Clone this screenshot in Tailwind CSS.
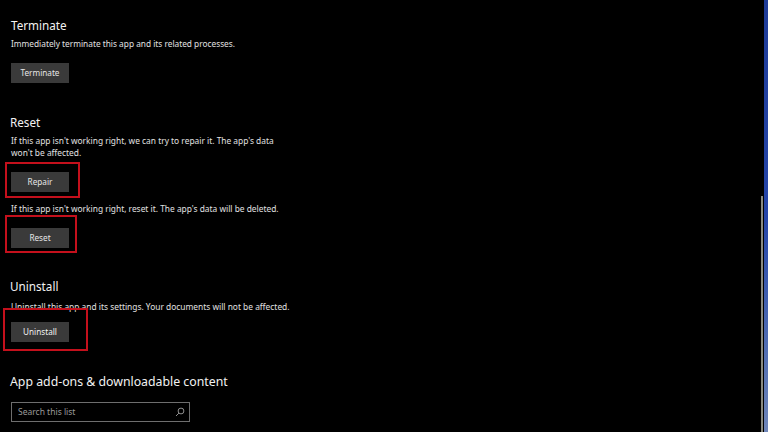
<!DOCTYPE html>
<html lang="en">
<head>
    <meta charset="UTF-8">
    <title>App settings</title>
    <script src="https://cdn.jsdelivr.net/npm/@tailwindcss/browser@4"></script>
</head>
<body class="bg-black">
    <div class="relative flex w-[768px] h-[432px] overflow-hidden bg-black text-white font-['Noto_Sans',sans-serif]">
        <main class="flex-1 pl-[11px] pt-[17px]">
            <!-- Terminate -->
            <h2 class="text-[11.7px] leading-[16px] text-[#f2f2f2]">Terminate</h2>
            <p class="mt-[4px] text-[8.3px] leading-[13px] text-[#e0e0e0]">Immediately terminate this app and its related processes.</p>
            <button class="mt-[13px] block w-[58px] h-[20px] bg-[#3a3a3a] text-[8.2px] text-[#e6e6e6]">Terminate</button>

            <!-- Reset -->
            <h2 class="mt-[31px] -ml-px text-[11.7px] leading-[16px] text-[#f2f2f2]">Reset</h2>
            <p class="mt-[5px] w-[280px] text-[8.4px] leading-[12px] text-[#e0e0e0]">If this app isn't working right, we can try to repair it. The app's data won't be affected.</p>
            <button class="mt-[13px] block w-[58px] h-[20px] bg-[#3a3a3a] text-[8.2px] text-[#e6e6e6]">Repair</button>
            <p class="mt-[10px] text-[8.4px] leading-[13px] text-[#e0e0e0]">If this app isn't working right, reset it. The app's data will be deleted.</p>
            <button class="mt-[13px] block w-[58px] h-[20px] bg-[#3a3a3a] text-[8.2px] text-[#e6e6e6]">Reset</button>

            <!-- Uninstall -->
            <h2 class="mt-[30px] -ml-px text-[11.7px] leading-[16px] text-[#f2f2f2]">Uninstall</h2>
            <p class="mt-[6px] text-[8.4px] leading-[13px] text-[#e0e0e0]">Uninstall this app and its settings. Your documents will not be affected.</p>
            <button class="mt-[9px] block w-[58px] h-[20px] bg-[#3a3a3a] text-[8.2px] text-[#f2f2f2]">Uninstall</button>

            <!-- Add-ons -->
            <h2 class="mt-[32px] -ml-px text-[12.3px] leading-[16px] text-[#f2f2f2]">App add-ons &amp; downloadable content</h2>
            <div class="mt-[12px] flex items-center justify-between w-[179px] h-[20px] border border-[#6e6e6e] pl-[6px] pr-[4px]">
                <span class="text-[8.5px] text-[#9a9a9a]">Search this list</span>
                <svg class="w-[10px] h-[10px] text-[#b5b5b5]" viewBox="0 0 10 10" fill="none" stroke="currentColor" stroke-width="0.8">
                    <circle cx="6" cy="4" r="2.9"/>
                    <path d="M3.9 6.1 L1 9"/>
                </svg>
            </div>
        </main>

        <!-- scrollbar thumb -->
        <div class="absolute left-[761px] top-[196px] w-[1.5px] h-[236px] bg-[#8a8a80]"></div>

        <!-- desktop wallpaper behind the window -->
        <div class="w-[4px] h-full bg-gradient-to-b from-[#1f3c98] via-[#2545a8] to-[#6f86b8]"></div>

        <!-- red annotation boxes -->
        <div class="absolute left-[5px] top-[162px] w-[75px] h-[36px] border-2 border-[#c4101c]"></div>
        <div class="absolute left-[5px] top-[215px] w-[72px] h-[38px] border-2 border-[#c4101c]"></div>
        <div class="absolute left-[3px] top-[308px] w-[85px] h-[43px] border-2 border-[#c4101c]"></div>
    </div>
</body>
</html>
